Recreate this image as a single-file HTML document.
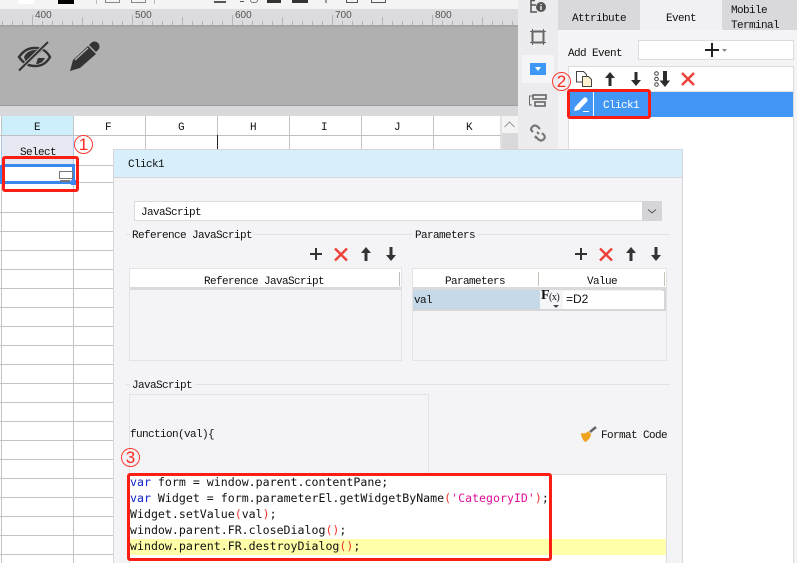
<!DOCTYPE html>
<html><head><meta charset="utf-8">
<style>
html,body{margin:0;padding:0;background:#fff}
#r{position:relative;width:797px;height:563px;overflow:hidden;background:#fff;font-family:"Liberation Mono",monospace;font-size:11px;letter-spacing:-.6px;color:#111}
#r div{position:absolute}
.t{position:absolute;white-space:pre;line-height:14px;height:14px}
.c{transform:translateX(-50%)}
.red{border:3px solid #fa1e14;border-radius:3px;box-sizing:border-box}
.num{width:19px;height:19px;border:1px solid #fa3a30;border-radius:50%;box-sizing:border-box;color:#fa2a20;font:17px/18px "Liberation Sans",sans-serif;text-align:center;letter-spacing:0}
.code{left:130px;font:11.6px/16px "DejaVu Sans Mono",monospace;letter-spacing:0;color:#111;white-space:pre;height:16px}
.k{color:#0a1ecc}.p{color:#f0362c}.s{color:#e0109a}
svg{position:absolute;overflow:visible}
</style></head><body><div id="r">

<!-- top strip -->
<div style="left:0;top:0;width:518px;height:9px;background:#f4f4f4"></div>
<div style="left:18px;top:0;width:16px;height:4px;background:#fff"></div>
<div style="left:58px;top:0;width:16px;height:4px;background:#000"></div>
<div style="left:96px;top:0;width:1px;height:4px;background:#bbb"></div>
<div style="left:105px;top:0;width:13px;height:2px;border:1px solid #888;border-top:0"></div>
<div style="left:131px;top:0;width:13px;height:2px;border:1px solid #888;border-top:0"></div>
<div style="left:154px;top:0;width:1px;height:4px;background:#bbb"></div>
<div style="left:214px;top:1px;width:12px;height:2px;background:#555"></div>
<div style="left:240px;top:1px;width:4px;height:1px;background:#555"></div>
<div style="left:250px;top:0;width:6px;height:2px;border:1px solid #777;border-top:0;border-radius:0 0 4px 4px"></div>
<div style="left:267px;top:0;width:14px;height:3px;background:#333"></div>
<div style="left:292px;top:0;width:16px;height:3px;background:#333"></div>
<div style="left:325px;top:0;width:2px;height:3px;background:#999"></div>
<div style="left:346px;top:0;width:10px;height:2px;border:1px solid #555;border-top:0"></div>
<div style="left:371px;top:0;width:13px;height:2px;border:1px solid #555;border-top:0"></div>

<!-- ruler -->
<div style="left:0;top:9px;width:518px;height:17px;background:#dcdcde"></div>
<div style="left:0;top:25px;width:518px;height:2px;background:#a4a4a4"></div>
<svg style="left:0;top:0" width="518" height="27"><path d="M2.500 21v4M12.500 21v4M22.500 21v4M32.500 15v10M42.500 21v4M52.500 21v4M62.500 21v4M72.500 21v4M82.500 17v8M92.500 21v4M102.500 21v4M112.500 21v4M122.500 21v4M132.500 15v10M142.500 21v4M152.500 21v4M162.500 21v4M172.500 21v4M182.500 17v8M192.500 21v4M202.500 21v4M212.500 21v4M222.500 21v4M232.500 15v10M242.500 21v4M252.500 21v4M262.500 21v4M272.500 21v4M282.500 17v8M292.500 21v4M302.500 21v4M312.500 21v4M322.500 21v4M332.500 15v10M342.500 21v4M352.500 21v4M362.500 21v4M372.500 21v4M382.500 17v8M392.500 21v4M402.500 21v4M412.500 21v4M422.500 21v4M432.500 15v10M442.500 21v4M452.500 21v4M462.500 21v4M472.500 21v4M482.500 17v8M492.500 21v4M502.500 21v4M512.500 21v4" stroke="#b4b4b6" fill="none"/></svg>
<span class="t" style="left:35px;top:9px;font:10px/14px 'Liberation Sans',sans-serif;letter-spacing:0;color:#555">400</span>
<span class="t" style="left:135px;top:9px;font:10px/14px 'Liberation Sans',sans-serif;letter-spacing:0;color:#555">500</span>
<span class="t" style="left:235px;top:9px;font:10px/14px 'Liberation Sans',sans-serif;letter-spacing:0;color:#555">600</span>
<span class="t" style="left:335px;top:9px;font:10px/14px 'Liberation Sans',sans-serif;letter-spacing:0;color:#555">700</span>
<span class="t" style="left:435px;top:9px;font:10px/14px 'Liberation Sans',sans-serif;letter-spacing:0;color:#555">800</span>

<!-- gray area -->
<div style="left:0;top:27px;width:518px;height:78px;background:#b0b0b0"></div>
<div style="left:0;top:105px;width:518px;height:1px;background:#9c9c9c"></div>
<div style="left:0;top:106px;width:518px;height:10px;background:#d9d9dc"></div>
<svg style="left:19px;top:41px" width="32" height="30" viewBox="0 0 32 30">
<path d="M0 16C5 9 10 7 16 7c6 0 11 2 15 9-4 7-9 9-15 9C10 25 5 23 0 16z" fill="none" stroke="#333" stroke-width="2.400"/>
<path d="M5 16c2-5 7-7 12-7 3 0 5 1 6 1L9 23c-2-1-3-4-4-7z" fill="#333"/>
<path d="M17 23c4 0 7-2 9-6h-7z" fill="#333"/>
<path d="M0 29.500L29 1" stroke="#b0b0b0" stroke-width="4"/>
<path d="M0 29.500L29 1" stroke="#333" stroke-width="2"/>
</svg>
<svg style="left:70px;top:41px" width="30" height="30" viewBox="0 0 30 30">
<path d="M0 30L3 19 18 5l8 8L10 27z" fill="#333"/>
<path d="M19 4l2-2c2-2 5-2 7 0s2 5 0 7l-2 2z" fill="#333"/>
<path d="M5 19L18 7" stroke="#b0b0b0" stroke-width="1.500" fill="none"/>
</svg>

<!-- spreadsheet -->
<div style="left:0;top:116px;width:501px;height:19px;background:#fff"></div>
<div style="left:1px;top:116px;width:72px;height:19px;background:#cdeefb"></div>
<div style="left:0;top:135px;width:501px;height:1px;background:#c0c0c0"></div>
<div style="left:1px;top:136px;width:72px;height:29px;background:#e6e9f2"></div>
<svg style="left:0;top:116px" width="501" height="447"><path d="M1.500 0V447M73.500 0V447M145.500 0V447M217.500 0V447M289.500 0V447M361.500 0V447M433.500 0V447M501 0V40" stroke="#c4c4c4" fill="none"/>
<path d="M0 49.500H113M0 66.500H113M0 96.500H113M0 115.500H113M0 134.500H113M0 153.500H113M0 172.500H113M0 191.500H113M0 210.500H113M0 229.500H113M0 248.500H113M0 267.500H113M0 286.500H113M0 305.500H113M0 324.500H113M0 343.500H113M0 362.500H113M0 381.500H113M0 400.500H113M0 419.500H113M0 438.500H113" stroke="#c4c4c4" fill="none"/></svg>
<div style="left:1px;top:136px;width:1px;height:29px;background:#a8c8ee"></div>
<div style="left:73px;top:136px;width:1px;height:29px;background:#a8c8ee"></div>
<div style="left:217px;top:135px;width:1px;height:14px;background:#222"></div>
<span class="t c" style="left:37px;top:120px;top:121px">E</span>
<span class="t c" style="left:108px;top:121px">F</span>
<span class="t c" style="left:181px;top:121px">G</span>
<span class="t c" style="left:253px;top:121px">H</span>
<span class="t c" style="left:324px;top:121px">I</span>
<span class="t c" style="left:397px;top:121px">J</span>
<span class="t c" style="left:469px;top:121px">K</span>
<span class="t c" style="left:38px;top:146px">Select</span>
<div style="left:5px;top:165px;width:68px;height:17px;background:#fff"></div>
<div style="left:5px;top:164px;width:70px;height:3px;background:#3a87ee"></div>
<div style="left:5px;top:181px;width:66px;height:3px;background:#3a87ee"></div>
<div style="left:72px;top:164px;width:3px;height:18px;background:#3a87ee"></div>
<div style="left:71px;top:180px;width:5px;height:5px;background:#3a87ee"></div>
<div style="left:0;top:165px;width:2px;height:19px;background:#3a87ee"></div>
<div style="left:59px;top:171px;width:14px;height:8px;border:1px solid #777;box-sizing:border-box;background:#fff"></div>
<div style="left:60px;top:180px;width:10px;height:2px;background:#777"></div>
<div class="red" style="left:2px;top:156px;width:77px;height:36px"></div>
<div class="num" style="left:74px;top:135px">1</div>

<!-- scrollbar -->
<div style="left:502px;top:116px;width:16px;height:447px;background:#f4f4f4"></div>
<svg style="left:504px;top:121px" width="11" height="7"><path d="M.5 6L5.500 1l5 5" stroke="#999" fill="none"/></svg>
<div style="left:502px;top:133px;width:16px;height:60px;background:#d9d9dc"></div>

<!-- side strip -->
<div style="left:518px;top:0;width:40px;height:563px;background:#ececee"></div>
<svg style="left:530px;top:0" width="16" height="13"><path d="M1 0v12h6M1 5h5M1 .5h4" stroke="#555" stroke-width="1.500" fill="none"/><circle cx="11" cy="7" r="5" fill="#555"/><path d="M11 4v1M11 6v4" stroke="#eee" stroke-width="1.500"/></svg>
<svg style="left:530px;top:29px" width="16" height="16"><path d="M2.500 2.500h11v11h-11z" fill="none" stroke="#666" stroke-width="2"/><path d="M0 2.500h3M13 2.500h3M0 13.500h3M13 13.500h3M2.500 0v3M13.500 0v3M2.500 13v3M13.500 13v3" stroke="#666"/></svg>
<div style="left:522px;top:55px;width:32px;height:28px;background:#f5f5f7"></div>
<div style="left:530px;top:63px;width:16px;height:12px;background:#3d98f5"></div>
<svg style="left:535px;top:67px" width="6" height="4"><path d="M0 0h6L3 4z" fill="#fff"/></svg>
<svg style="left:529px;top:94px" width="18" height="13"><path d="M3 2H.5v9H3" stroke="#666" fill="none" stroke-width="1"/><rect x="4" y="1" width="13" height="4" fill="none" stroke="#666" stroke-width="1.600"/><rect x="6" y="8" width="10" height="4" fill="none" stroke="#666" stroke-width="1.600"/></svg>
<svg style="left:530px;top:125px" width="16" height="16"><path d="M2 2c2-2 4-2 6 0l2 2M9 9L7 7M3 7L1.500 5.500c-1-1-.5-2 .5-3.500M7 13c-1 0-1-.5-2-1.500M14 14c-2 2-4 2-6 0l-3-3M12 8l2 2c1 1 1 3 0 4" stroke="#777" stroke-width="2.200" fill="none"/></svg>

<!-- right panel -->
<div style="left:558px;top:0;width:239px;height:563px;background:#f4f4f6"></div>
<div style="left:558px;top:0;width:82px;height:30px;background:#d9d9dc"></div>
<div style="left:640px;top:0;width:82px;height:30px;background:#f1f1f3"></div>
<div style="left:722px;top:0;width:75px;height:30px;background:#d9d9dc"></div>
<span class="t" style="left:572px;top:11px;top:12px">Attribute</span>
<span class="t" style="left:666px;top:12px">Event</span>
<span class="t" style="left:731px;top:4px">Mobile</span>
<span class="t" style="left:731px;top:19px">Terminal</span>
<span class="t" style="left:568px;top:47px">Add Event</span>
<div style="left:638px;top:40px;width:156px;height:20px;background:#fff;border:1px solid #dcdcdc;box-sizing:border-box"></div>
<svg style="left:705px;top:43px" width="26" height="14"><path d="M7 0v14M0 7h14" stroke="#222" stroke-width="2"/><path d="M17 6h5l-2.500 3z" fill="#888"/></svg>
<div style="left:568px;top:66px;width:226px;height:497px;background:#fff;border:1px solid #dcdcdc;box-sizing:border-box;border-bottom:0"></div>
<div style="left:569px;top:91px;width:224px;height:1px;background:#e2e2e2"></div>
<div style="left:569px;top:92px;width:224px;height:25px;background:#4297f6"></div>
<svg style="left:576px;top:71px" width="17" height="16"><path d="M.5.500h7l3 3V11H.5z" fill="#fff" stroke="#444"/><path d="M6.500 5.500h6l3 3v7h-9z" fill="#fdf3d2" stroke="#444"/></svg>
<svg style="left:605px;top:72px" width="10" height="14"><path d="M5 0l5 6H6.500v8h-3V6H0z" fill="#2b2b2b"/></svg>
<svg style="left:631px;top:72px" width="10" height="14"><path d="M5 14L0 8h3.500V0h3v8H10z" fill="#2b2b2b"/></svg>
<svg style="left:654px;top:71px" width="16" height="16"><circle cx="2.500" cy="2.500" r="1.800" fill="none" stroke="#444"/><circle cx="2.500" cy="8" r="1.800" fill="none" stroke="#444"/><circle cx="2.500" cy="13.500" r="1.800" fill="none" stroke="#444"/><path d="M11 16L5.500 9.500H9V0h4v9.500h3z" fill="#2b2b2b"/></svg>
<svg style="left:681px;top:72px" width="14" height="14"><path d="M1 1l12 12M13 1L1 13" stroke="#ee4038" stroke-width="2.400"/></svg>
<svg style="left:574px;top:97px" width="15" height="15"><path d="M0 14l1-4L9 1.500c1-1 2-1.500 3-1 1 .5 1.500 1.500 1.500 2.500s-.5 1.500-1 2L5 13z" fill="#fff"/><path d="M9 14.500h6" stroke="#fff"/></svg>
<div style="left:593px;top:92px;width:1px;height:25px;background:#fff"></div>
<span class="t" style="left:603px;top:99px;color:#fff">Click1</span>
<div class="red" style="left:567px;top:89px;width:84px;height:30px"></div>
<div class="num" style="left:552px;top:72px;background:transparent">2</div>

<!-- dialog -->
<div style="left:113px;top:149px;width:570px;height:414px;background:#f4f4f6;border:1px solid #d6d6da;border-bottom:0;box-sizing:border-box"></div>
<div style="left:114px;top:150px;width:568px;height:27px;background:#d6effb;border-bottom:1px solid #d6d6da"></div>
<span class="t" style="left:128px;top:158px">Click1</span>
<div style="left:134px;top:201px;width:528px;height:20px;background:#fff;border:1px solid #dcdcdc;box-sizing:border-box"></div>
<div style="left:642px;top:201px;width:20px;height:20px;background:#d5d5d8"></div>
<svg style="left:648px;top:209px" width="8" height="5"><path d="M0 .5l4 3.500 4-3.500" stroke="#555" fill="none"/></svg>
<span class="t" style="left:141px;top:206px">JavaScript</span>

<div style="left:126px;top:234px;width:279px;height:1px;background:#e2e2e6"></div>
<div style="left:130px;top:228px;width:124px;height:12px;background:#f4f4f6"></div>
<span class="t" style="left:132px;top:229px">Reference JavaScript</span>
<div style="left:405px;top:234px;width:265px;height:1px;background:#e2e2e6"></div>
<div style="left:412px;top:228px;width:65px;height:12px;background:#f4f4f6"></div>
<span class="t" style="left:415px;top:229px">Parameters</span>

<!-- tool icons -->
<svg style="left:310px;top:248px" width="12" height="12"><path d="M6 0v12M0 6h12" stroke="#333" stroke-width="2"/></svg>
<svg style="left:334px;top:248px" width="14" height="13"><path d="M1 .5l12 12M13 .5l-12 12" stroke="#ee4038" stroke-width="2.400"/></svg>
<svg style="left:361px;top:247px" width="10" height="14"><path d="M5 0l5 6H6.500v8h-3V6H0z" fill="#333"/></svg>
<svg style="left:386px;top:247px" width="10" height="14"><path d="M5 14L0 8h3.500V0h3v8H10z" fill="#333"/></svg>
<svg style="left:575px;top:248px" width="12" height="12"><path d="M6 0v12M0 6h12" stroke="#333" stroke-width="2"/></svg>
<svg style="left:599px;top:248px" width="14" height="13"><path d="M1 .5l12 12M13 .5l-12 12" stroke="#ee4038" stroke-width="2.400"/></svg>
<svg style="left:626px;top:247px" width="10" height="14"><path d="M5 0l5 6H6.500v8h-3V6H0z" fill="#333"/></svg>
<svg style="left:651px;top:247px" width="10" height="14"><path d="M5 14L0 8h3.500V0h3v8H10z" fill="#333"/></svg>

<!-- left table -->
<div style="left:129px;top:268px;width:273px;height:93px;border:1px solid #e3e3e6;box-sizing:border-box"></div>
<div style="left:130px;top:269px;width:271px;height:18px;background:#fff"></div>
<div style="left:130px;top:287px;width:271px;height:3px;background:#dadadc"></div>
<div style="left:399px;top:272px;width:1px;height:14px;background:#bbb"></div>
<span class="t c" style="left:264px;top:275px">Reference JavaScript</span>

<!-- right table -->
<div style="left:412px;top:268px;width:255px;height:93px;border:1px solid #e3e3e6;box-sizing:border-box"></div>
<div style="left:413px;top:269px;width:253px;height:18px;background:#fff"></div>
<div style="left:413px;top:287px;width:253px;height:3px;background:#dadadc"></div>
<div style="left:538px;top:272px;width:1px;height:14px;background:#c4c4b8"></div>
<div style="left:664px;top:272px;width:1px;height:14px;background:#c4c4b8"></div>
<span class="t c" style="left:475px;top:275px">Parameters</span>
<span class="t c" style="left:602px;top:275px">Value</span>
<div style="left:413px;top:290px;width:127px;height:19px;background:#c5d9e8"></div>
<div style="left:413px;top:309px;width:253px;height:2px;background:#d6d6d8"></div>
<div style="left:662px;top:290px;width:4px;height:19px;background:#d6d6d8"></div>
<span class="t" style="left:414px;top:294px">val</span>
<div style="left:540px;top:290px;width:22px;height:19px;background:#f6f6f8"></div>
<span class="t" style="left:541px;top:289px;font:bold 14px/14px 'Liberation Serif',serif;letter-spacing:0">F</span>
<span class="t" style="left:549px;top:291px;font:10px/14px 'Liberation Serif',serif;letter-spacing:-.5px">(x)</span>
<svg style="left:553px;top:305px" width="6" height="3"><path d="M0 0h6L3 3z" fill="#444"/></svg>
<div style="left:563px;top:291px;width:101px;height:18px;background:#fff"></div>
<span class="t" style="left:566px;top:292px;font:12px/14px 'Liberation Sans',sans-serif;letter-spacing:0">=D2</span>

<!-- JS section -->
<div style="left:126px;top:384px;width:544px;height:1px;background:#e2e2e6"></div>
<div style="left:130px;top:378px;width:65px;height:12px;background:#f4f4f6"></div>
<span class="t" style="left:132px;top:379px">JavaScript</span>
<div style="left:129px;top:394px;width:300px;height:81px;border:1px solid #e3e3e6;border-bottom:0;box-sizing:border-box"></div>
<span class="t" style="left:130px;top:428px">function(val){</span>
<svg style="left:581px;top:426px" width="16" height="16"><path d="M9 6l6-5" stroke="#666" stroke-width="2.500"/><path d="M0 7c3 1 6 0 7-2l3 3c0 3-3 7-6 8-2-2-4-5-4-9z" fill="#efa21f"/></svg>
<span class="t" style="left:601px;top:429px">Format Code</span>

<!-- editor -->
<div style="left:129px;top:474px;width:538px;height:89px;background:#fff;border:1px solid #dcdcdc;border-bottom:0;box-sizing:border-box"></div>
<div style="left:130px;top:539px;width:536px;height:16px;background:#feffa8"></div>
<div class="code" style="top:474px"><span class="k">var</span> form = window.parent.contentPane;</div>
<div class="code" style="top:490px"><span class="k">var</span> Widget = form.parameterEl.getWidgetByName<span class="p">(</span><span class="s">'CategoryID'</span><span class="p">)</span>;</div>
<div class="code" style="top:506px">Widget.setValue<span class="p">(</span>val<span class="p">)</span>;</div>
<div class="code" style="top:522px">window.parent.FR.closeDialog<span class="p">()</span>;</div>
<div class="code" style="top:538px">window.parent.FR.destroyDialog<span class="p">()</span>;</div>
<div class="red" style="left:127px;top:473px;width:425px;height:88px"></div>
<div class="num" style="left:121px;top:448px">3</div>

</div></body></html>
